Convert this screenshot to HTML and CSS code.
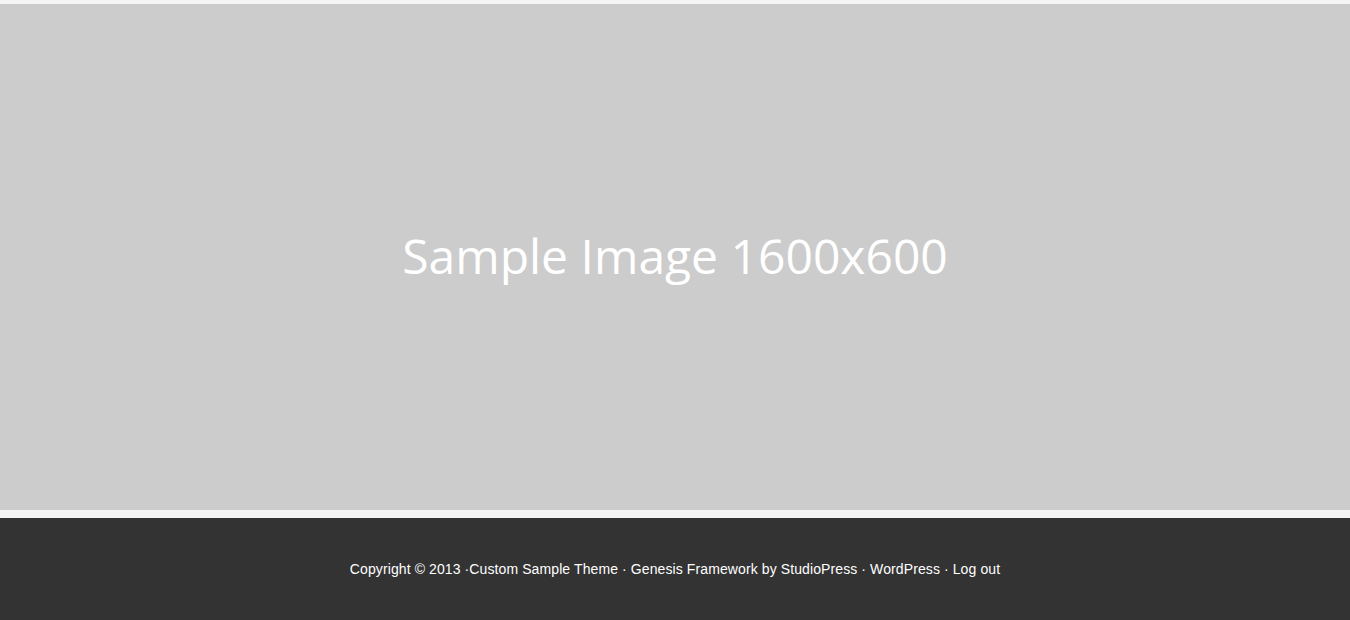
FILE: index.html
```html
<!DOCTYPE html>
<html lang="en">
<head>
    <meta charset="UTF-8">
    <meta name="viewport" content="width=device-width, initial-scale=1.0">
    <title>Custom Sample Theme</title>
    <link rel="stylesheet" href="styles.css">
</head>
<body>
    <div class="site-container">
        <!-- Home slider image -->
        <div class="home-slider">
            <div class="slide-image">
                <span>Sample Image 1600x600</span>
            </div>
        </div>

        <!-- Footer -->
        <footer class="site-footer">
            <p>Copyright &copy; 2013 &middot;<a href="#">Custom Sample Theme</a> &middot; <a href="#">Genesis Framework</a> by <a href="#">StudioPress</a> &middot; <a href="#">WordPress</a> &middot; <a href="#">Log out</a></p>
        </footer>
    </div>
</body>
</html>
```

FILE: styles.css
```css
body {
    margin: 0;
    padding: 0;
    background: #f5f5f5;
    font-family: 'Liberation Sans', Arial, sans-serif;
}

.site-container {
    padding-top: 4px;
}

.home-slider {
    margin-bottom: 8px;
}

.slide-image {
    aspect-ratio: 1600 / 600;
    background: #cccccc;
    display: flex;
    align-items: center;
    justify-content: center;
}

.slide-image span {
    font-family: 'Open Sans', sans-serif;
    font-size: 48px;
    color: #fff;
    margin-top: -4px;
}

.site-footer {
    background: #333;
    padding: 40px 0;
    text-align: center;
    min-height: 120px;
    box-sizing: border-box;
}

.site-footer p {
    margin: 0;
    color: #fff;
    font-size: 14px;
    line-height: 22px;
    letter-spacing: 0.1px;
}

.site-footer a {
    color: #fff;
    text-decoration: none;
}
```
